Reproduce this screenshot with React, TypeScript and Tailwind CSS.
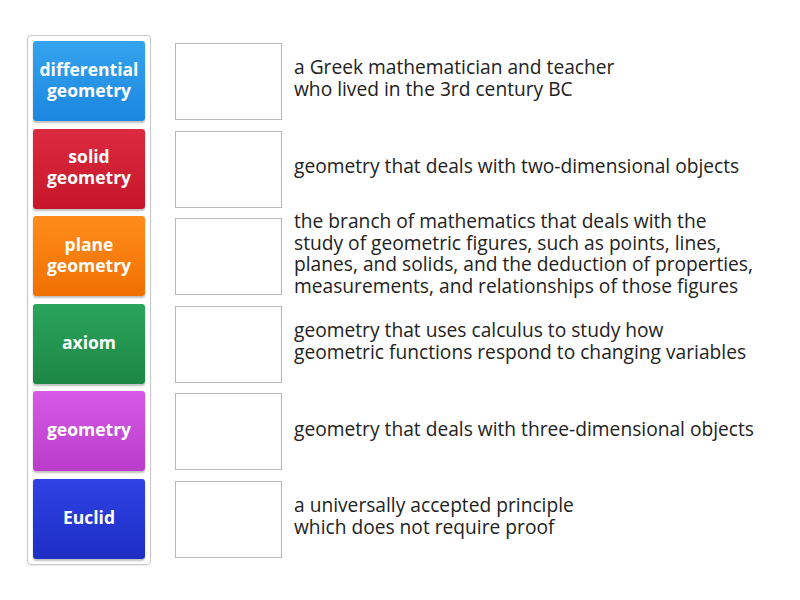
import React from "react";

const tiles = [
  { label: ["differential", "geometry"], cls: "bg-gradient-to-b from-[#34a3ee] to-[#1b87df]" },
  { label: ["solid", "geometry"], cls: "bg-gradient-to-b from-[#dc2a40] to-[#c61528]" },
  { label: ["plane", "geometry"], cls: "bg-gradient-to-b from-[#ff8c1a] to-[#f07000]" },
  { label: ["axiom"], cls: "bg-gradient-to-b from-[#2aa45c] to-[#1d8746]" },
  { label: ["geometry"], cls: "bg-gradient-to-b from-[#d65ae6] to-[#b93dc9]" },
  { label: ["Euclid"], cls: "bg-gradient-to-b from-[#2f42e4] to-[#1d2ec4]" },
];

const defs = [
  ["a Greek mathematician and teacher", "who lived in the 3rd century BC"],
  ["geometry that deals with two-dimensional objects"],
  [
    "the branch of mathematics that deals with the",
    "study of geometric figures, such as points, lines,",
    "planes, and solids, and the deduction of properties,",
    "measurements, and relationships of those figures",
  ],
  ["geometry that uses calculus to study how", "geometric functions respond to changing variables"],
  ["geometry that deals with three-dimensional objects"],
  ["a universally accepted principle", "which does not require proof"],
];

export default function App() {
  return (
    <div
      className="w-[800px] h-[600px] bg-white flex items-start pt-[35px] pl-[27px]"
      style={{ fontFamily: '"Open Sans", "Liberation Sans", sans-serif' }}
    >
      <div className="w-[124px] border border-[#c8c8c8] rounded-[4px] p-[5px] flex flex-col gap-[7.6px] shadow-[0_1px_2px_rgba(0,0,0,0.08)]">
        {tiles.map((t, i) => (
          <div
            key={i}
            className={`h-[80px] w-[112px] rounded-[3px] flex flex-col items-center justify-center pb-[3px] text-white font-bold text-[17.5px] leading-[21px] shadow-[0_2px_2px_rgba(0,0,0,0.25)] ${t.cls}`}
          >
            {t.label.map((l, j) => (
              <span key={j}>{l}</span>
            ))}
          </div>
        ))}
      </div>
      <div className="ml-[24px] pt-[8px] flex flex-col gap-[10.6px]">
        {defs.map((d, i) => (
          <div key={i} className="flex items-center h-[77px]">
            <div className="w-[107px] h-[77px] border border-[#b8b8b8] bg-white shrink-0" />
            <div className="ml-[12px] pb-[7px] text-[19.2px] leading-[21.6px] text-[#222]">
              {d.map((l, j) => (
                <div key={j} className="whitespace-nowrap">{l}</div>
              ))}
            </div>
          </div>
        ))}
      </div>
    </div>
  );
}
